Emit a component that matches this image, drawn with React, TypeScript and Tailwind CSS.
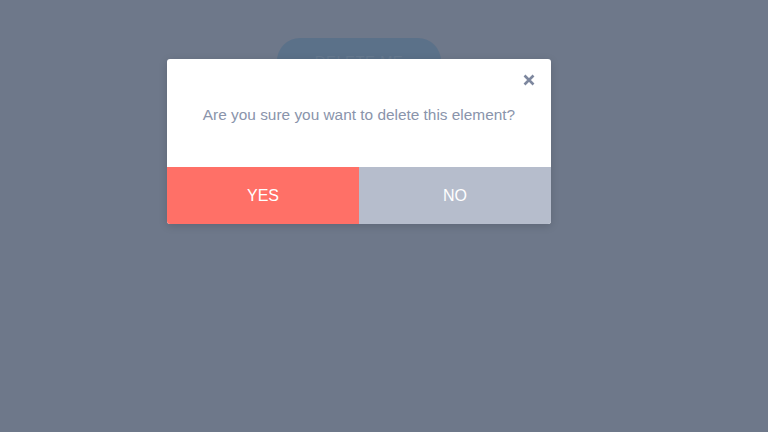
import React from "react";

export default function App() {
  return (
    <div
      className="relative w-[768px] h-[432px] overflow-hidden bg-[#6e788a]"
      style={{ fontFamily: '"Liberation Sans", Arial, sans-serif' }}
    >
      <div className="pt-[38px] pl-[277px]">
        <div className="w-[164px] h-[46px] rounded-[23px] bg-[#5b7189] flex items-center justify-center text-[15px] text-[#65798f] tracking-wide">
          DELETE ME
        </div>
      </div>
      <div className="absolute left-[167px] top-[59px] w-[384px] rounded-[3px] bg-white overflow-hidden shadow-[0_2px_8px_rgba(0,0,0,0.15)]">
        <div className="relative h-[108px] flex items-start justify-center pt-[44px]">
          <button className="absolute right-[16px] top-[15px] text-[#7d879e]" aria-label="close">
            <svg width="12" height="12" viewBox="0 0 12 12">
              <path d="M1.5 1.5 L10.5 10.5 M10.5 1.5 L1.5 10.5" stroke="currentColor" strokeWidth="2.6" strokeLinecap="butt" />
            </svg>
          </button>
          <p className="text-[15.4px] text-[#8a94ab]">Are you sure you want to delete this element?</p>
        </div>
        <div className="flex h-[57px]">
          <button className="flex-1 bg-[#ff7067] text-white text-[16px] flex items-center justify-center">YES</button>
          <button className="flex-1 bg-[#b6bdcc] text-white text-[16px] flex items-center justify-center">NO</button>
        </div>
      </div>
    </div>
  );
}
